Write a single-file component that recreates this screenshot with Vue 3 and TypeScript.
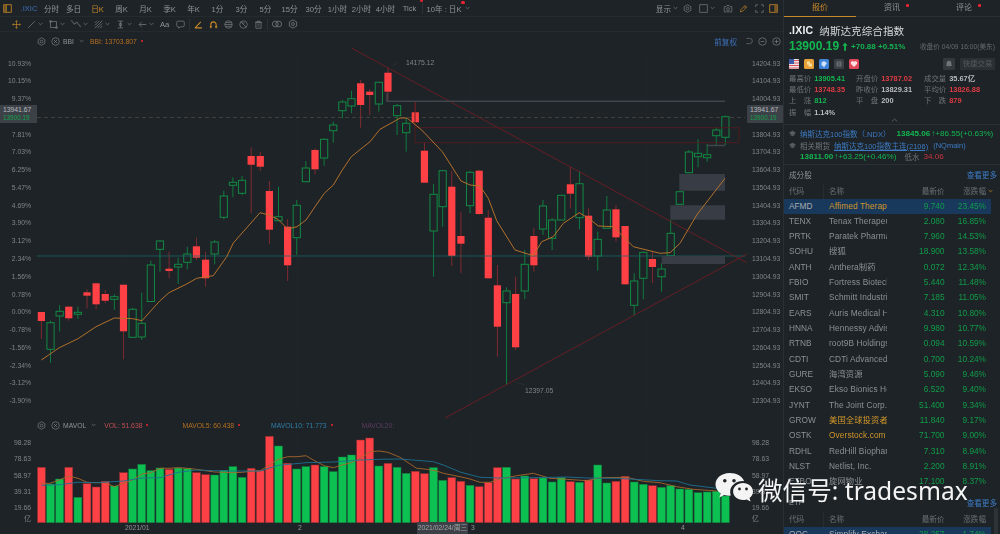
<template>
  <div class="app">
    <div class="ui">
      <div class="main">
        <!-- 周期栏 -->
        <div class="period-bar">
          <svg class="ic panel-ic" viewBox="0 0 12 12"><rect x="1" y="1" width="10" height="10" /><path d="M4.5 1v10" /><rect x="1.5" y="1.5" width="3" height="9" class="solid" /></svg>
          <span class="cell symbol">.IXIC</span>
          <span class="cell wide">分时</span>
          <span class="cell wide">多日</span>
          <span
            v-for="p in periods"
            :key="p"
            class="cell"
            :class="{ on: p === '日K', dotted: p === 'Tick' }"
          >{{ p }}</span>
          <i class="vsep"></i>
          <span class="range">10年 : 日K<i class="red-dot"></i><svg class="chev" viewBox="0 0 6 4"><path d="M.8.8 3 3l2.2-2.2" /></svg></span>
          <div class="bar-right">
            <span class="show">显示</span>
            <svg class="chev" viewBox="0 0 6 4"><path d="M.8.8 3 3l2.2-2.2" /></svg>
            <svg class="ic r1" viewBox="0 0 12 12"><path d="M6 1l4.4 2.5v5L6 11 1.6 8.5v-5z" /><circle cx="6" cy="6" r="1.8" /></svg>
            <svg class="ic r2" viewBox="0 0 12 12"><rect x="1" y="1" width="10" height="10" /></svg>
            <svg class="chev" viewBox="0 0 6 4"><path d="M.8.8 3 3l2.2-2.2" /></svg>
            <svg class="ic r3" viewBox="0 0 12 12"><path d="M1 3.5h2.5l1-1.5h3l1 1.5H11v7H1z" /><circle cx="6" cy="6.8" r="2" /></svg>
            <svg class="ic r4 orange" viewBox="0 0 12 12"><path d="M2 10.5l.6-3L8 2l2.2 2.2-5.4 5.5zM6.8 3.2 9 5.4" /></svg>
            <svg class="ic r5" viewBox="0 0 12 12"><path d="M1 4V1h3M8 1h3v3M11 8v3H8M4 11H1V8" /></svg>
            <svg class="ic r6 panel-ic" viewBox="0 0 12 12"><rect x="1" y="1" width="10" height="10" /><rect x="7" y="1.5" width="3.5" height="9" class="solid" /></svg>
          </div>
        </div>

        <!-- 画线工具 -->
        <div class="tool-bar">
          <template v-for="t in tools" :key="t.id">
            <i v-if="t.id.startsWith('sep')" class="tool-sep"></i>
            <span v-else-if="t.id === 'text'" class="aa">Aa</span>
            <template v-else>
              <svg class="ic tool" :class="[t.tone, { wider: t.wide }]" viewBox="0 0 12 12">
                <path :d="t.d" />
              </svg>
              <svg v-if="t.chev" class="chev tool-chev" viewBox="0 0 6 4"><path d="M.8.8 3 3l2.2-2.2" /></svg>
            </template>
          </template>
        </div>

        <!-- K线 -->
        <section class="pane price-pane">
          <div class="pane-head">
            <svg class="ic head-ic" viewBox="0 0 12 12"><path d="M6 1l4.4 2.5v5L6 11 1.6 8.5v-5z" /><circle cx="6" cy="6" r="1.8" /></svg>
            <svg class="ic head-ic" viewBox="0 0 12 12"><circle cx="6" cy="6" r="5" /><path d="M4 4l4 4M8 4l-4 4" /></svg>
            <span class="ind-name">BBI</span>
            <svg class="chev ind-chev" viewBox="0 0 6 4"><path d="M.8.8 3 3l2.2-2.2" /></svg>
            <span class="ind-val bbi">BBI: 13703.807</span>
            <i class="tiny-dot"></i>
            <div class="head-right">
              <span class="adjust">前复权</span>
              <svg class="ic hr1" viewBox="0 0 12 12"><path d="M2 2h5a3.8 3.8 0 0 1 0 8H2" /></svg>
              <svg class="ic hr2" viewBox="0 0 12 12"><circle cx="6" cy="6" r="5" /><path d="M3.5 6h5" /></svg>
              <svg class="ic hr2" viewBox="0 0 12 12"><circle cx="6" cy="6" r="5" /><path d="M3.5 6h5M6 3.5v5" /></svg>
            </div>
          </div>
          <div class="pane-body">
            <div class="axis axis-left">
              <span v-for="l in pctLabels" :key="l">{{ l }}</span>
            </div>
            <svg class="plot" viewBox="37 50 708 360">
              <path d="M123 50V410M297 50V410M471 50V410M646 50V410M37 114H745M37 203H745M37 347H745" class="grid" />
              <path d="M37 117.5H745" class="last-price" />
              <template v-for="(c, i) in candles" :key="i">
                <path :d="`M${cx(i)} ${c[2]}V${c[3]}`" :class="c[4] ? 'wick-up' : 'wick-down'" />
                <rect
                  :x="cx(i) - 3.6"
                  :y="c[0]"
                  width="7.2"
                  :height="c[1] - c[0]"
                  :class="c[4] ? 'body-up' : 'body-down'"
                />
              </template>
              <path d="M37 256H745" class="teal" />
              <path d="M352 48.300 746.7 262.7M445 418 747 254" class="trend" />
              <path d="M415 102V142.7H739V127.7H415" class="box-line" />
              <path d="M387 93V101.3H725" class="gray-line" />
              <rect x="679.3" y="174" width="45.7" height="16.7" class="zone" />
              <rect x="670.3" y="205.3" width="54.7" height="14.4" class="zone" />
              <rect x="661.7" y="256" width="63.3" height="8" class="zone" />
              <path d="M706.7 145.5H725" class="gray-line" />
              <polyline :points="bbiLine" class="bbi-line" />
              <path d="M392 66l6 -3M525 385l-10-3" class="note-line" />
              <text x="406" y="65" class="note">14175.12</text>
              <text x="525" y="393" class="note">12397.05</text>
            </svg>
            <div class="axis axis-right">
              <span v-for="l in priceLabels" :key="l">{{ l }}</span>
            </div>
          </div>
          <div class="price-tag tag-left"><span>13941.67</span><b>13900.19</b></div>
          <div class="price-tag tag-right"><span>13941.67</span><b>13900.19</b></div>
        </section>

        <!-- 成交量 -->
        <section class="pane vol-pane">
          <div class="pane-head vol-head">
            <svg class="ic head-ic" viewBox="0 0 12 12"><path d="M6 1l4.4 2.5v5L6 11 1.6 8.5v-5z" /><circle cx="6" cy="6" r="1.8" /></svg>
            <svg class="ic head-ic" viewBox="0 0 12 12"><circle cx="6" cy="6" r="5" /><path d="M4 4l4 4M8 4l-4 4" /></svg>
            <span class="ind-name">MAVOL</span>
            <svg class="chev ind-chev" viewBox="0 0 6 4"><path d="M.8.8 3 3l2.2-2.2" /></svg>
            <span class="ind-val v0">VOL: 51.638</span><i class="tiny-dot"></i>
            <span class="ind-val v5">MAVOL5: 60.438</span><i class="tiny-dot"></i>
            <span class="ind-val v10">MAVOL10: 71.773</span><i class="tiny-dot"></i>
            <span class="ind-val v20">MAVOL20:</span>
          </div>
          <div class="pane-body">
            <div class="axis axis-left vol-axis">
              <span v-for="l in volLabels" :key="l">{{ l }}</span>
              <span>亿</span>
            </div>
            <svg class="plot" viewBox="37 432 708 90">
              <path d="M123 432V523M297 432V523M471 432V523M646 432V523" class="grid" />
              <rect
                v-for="(b, i) in volumes"
                :key="i"
                :x="cx(i) - 3.9"
                :y="b[0]"
                width="7.8"
                :height="522.7 - b[0]"
                :class="b[1] ? 'vol-up' : 'vol-down'"
              />
              <polyline :points="ma5Line" class="ma5" />
              <polyline :points="ma10Line" class="ma10" />
            </svg>
            <div class="axis axis-right vol-axis">
              <span v-for="l in volLabels" :key="l">{{ l }}</span>
              <span>亿</span>
            </div>
          </div>
        </section>

        <div class="time-axis">
          <span v-for="t in timeTicks" :key="t.label" class="tick" :style="{ left: t.x + 'px' }">{{ t.label }}</span>
          <span class="tick cursor-time">2021/02/24/周三</span>
        </div>
      </div>

      <!-- 右侧面板 -->
      <aside class="side">
        <div class="side-tabs">
          <span class="side-tab active">报价</span>
          <span class="side-tab">资讯<i class="red-dot"></i></span>
          <span class="side-tab">评论<i class="red-dot"></i></span>
        </div>

        <div class="quote">
          <div class="title"><b>.IXIC</b><span>纳斯达克综合指数</span></div>
          <div class="price-line">
            <b class="last">13900.19</b>
            <svg class="up-arrow" viewBox="0 0 8 12"><path d="M4 .5 7.5 5H5.2v6.5H2.8V5H.5z" /></svg>
            <b class="chg">+70.88 +0.51%</b>
            <span class="close-time">收盘价 04/09 16:00(美东)</span>
          </div>
          <div class="badges">
            <svg class="badge" viewBox="0 0 10 10"><rect width="10" height="10" rx="1" fill="#e8e8ec" /><path d="M0 1.5h10M0 4h10M0 6.5h10M0 9h10" stroke="#e0525a" stroke-width="1.2" /><rect width="5" height="5" fill="#3c5aa8" /></svg>
            <svg class="badge" viewBox="0 0 10 10"><rect width="10" height="10" rx="1.5" fill="#e8a03a" /><path d="M3 2.5h3v2h2v3H4.500v-2H3z" fill="#f7dd9a" /></svg>
            <svg class="badge" viewBox="0 0 10 10"><rect width="10" height="10" rx="1.5" fill="#3f82d8" /><path d="M2.500 3.500 5 2l3 2-3 4.500-1.500-2H2.500z" fill="#cfe2f8" /></svg>
            <svg class="badge" viewBox="0 0 10 10"><rect width="10" height="10" rx="1.5" fill="#3b4046" /><path d="M3 3h4v4H3zM3 5h4" fill="none" stroke="#7d8288" stroke-width=".8" /></svg>
            <svg class="badge" viewBox="0 0 10 10"><rect width="10" height="10" rx="1.5" fill="#e0485a" /><path d="M5 8 2 5a1.700 1.700 0 0 1 3-2 1.700 1.700 0 0 1 3 2z" fill="#fbdde0" /></svg>
            <span class="bell-btn"><svg viewBox="0 0 10 10"><path d="M5 1a3 3 0 0 1 3 3v2l1 1.500H1L2 6V4a3 3 0 0 1 3-3zM4 8.500h2v.7H4z" /></svg></span>
            <span class="trade-btn">快捷交易</span>
          </div>

          <div class="stats">
            <div v-for="s in quoteStats" :key="s.label" class="stat">
              <span class="stat-label">{{ s.label }}</span>
              <b :class="s.tone">{{ s.value }}</b>
            </div>
          </div>
          <svg class="fold" viewBox="0 0 8 4"><path d="M1 3.500 4 1l3 2.500" /></svg>
        </div>

        <div class="related">
          <div class="rel-row">
            <svg class="layer" viewBox="0 0 8 8"><path d="M4 1l3.500 2.200L4 5.400.5 3.200zM1 5l3 1.800L7 5" /></svg>
            <span class="link">纳斯达克100指数（.NDX）</span>
            <span class="rel-num">13845.06</span>
            <span class="rel-chg">↑+86.55(+0.63%)</span>
          </div>
          <div class="rel-row">
            <svg class="layer" viewBox="0 0 8 8"><path d="M4 1l3.500 2.200L4 5.400.5 3.200zM1 5l3 1.800L7 5" /></svg>
            <span class="rel-lab">相关期货</span>
            <span class="link under">纳斯达克100指数主连(2106)</span>
            <span class="link nq">(NQmain)</span>
          </div>
          <div class="rel-row third">
            <span class="rel-num">13811.00</span>
            <span class="rel-chg">↑+63.25(+0.46%)</span>
            <span class="rel-lab basis">低水</span>
            <span class="basis-val">34.06</span>
          </div>
        </div>

        <div class="sec-head"><span>成分股</span><a>查看更多</a></div>
        <div class="thead">
          <span>代码</span><span>名称</span><span class="num">最新价</span>
          <span class="num">涨跌幅<svg class="sort" viewBox="0 0 6 4"><path d="M.8.8 3 3l2.200-2.200" /></svg></span>
        </div>
        <div class="tbody">
          <div
            v-for="(r, i) in holdings"
            :key="r.code"
            class="trow"
            :class="{ selected: i === 0 }"
          >
            <span>{{ r.code }}</span>
            <span class="name" :class="{ hot: r.hot }">{{ r.name }}</span>
            <span class="num up">{{ r.price }}</span>
            <span class="num up">{{ r.pct }}</span>
          </div>
        </div>

        <div class="sec-head etf-head"><span>ETF</span><a>查看更多</a></div>
        <div class="thead">
          <span>代码</span><span>名称</span><span class="num">最新价</span><span class="num">涨跌幅</span>
        </div>
        <div class="trow selected">
          <span>QQC</span><span class="name">Simplify Exchang</span><span class="num up">28.257</span><span class="num up">1.74%</span>
        </div>
        <i class="scroll-thumb"></i>
      </aside>
    </div>

    <!-- 公众号水印 -->
    <div class="watermark">
      <svg class="wx" viewBox="0 0 38 34">
        <path d="M14.500 1C6.700 1 .5 6.100.5 12.400c0 3.600 2 6.800 5.200 8.900L4.300 25.400l4.900-2.500c1.700.5 3.400.8 5.300.8l1.300-.1c-.4-1.200-.6-2.400-.6-3.700 0-6 5.700-10.800 12.700-10.800l1.200.1C27.700 4.400 21.600 1 14.500 1z" />
        <path d="M28 11c-5.500 0-9.900 3.800-9.900 8.500s4.400 8.500 9.900 8.500c1.300 0 2.500-.2 3.600-.6l4 2.100-1.100-3.400c2.100-1.600 3.500-4 3.500-6.600C38 14.800 33.500 11 28 11z" />
        <circle cx="9.800" cy="8.700" r="1.800" class="eye" />
        <circle cx="19" cy="8.700" r="1.800" class="eye" />
        <circle cx="24.500" cy="17" r="1.400" class="eye" />
        <circle cx="31.500" cy="17" r="1.400" class="eye" />
      </svg>
      <span>微信号: tradesmax</span>
    </div>
  </div>
</template>

<script setup lang="ts">
import { computed } from 'vue'

type Candle = [number, number, number, number, boolean]

const periods = ['日K', '周K', '月K', '季K', '年K', '1分', '3分', '5分', '15分', '30分', '1小时', '2小时', '4小时', 'Tick']

const tools = [
  { id: 'move', tone: 'orange', d: 'M6 .8v10.400M.8 6h10.400M4.500 2.300 6 .8l1.500 1.500M4.500 9.700 6 11.200l1.500-1.500M2.300 4.500.8 6l1.500 1.500M9.700 4.500 11.200 6 9.700 7.500' },
  { id: 'line', chev: true, d: 'M1.500 10.500 10.500 1.500' },
  { id: 'rect', chev: true, d: 'M2 2h8v8H2zM1 1h2v2H1zM9 9h2v2H9z' },
  { id: 'zig', chev: true, wide: true, d: 'M.5 2 4 6l3-2 4.500 5M.5 2h1M4 6h1M7 4h1M10.500 9h1' },
  { id: 'hatch', chev: true, d: 'M1 4 4 1M1 7.500 7.500 1M1 11 11 1M4.500 11 11 4.500M8 11l3-3' },
  { id: 'fib', chev: true, d: 'M2.500 1.500h7M2.500 10.500h7M6 1.500v9M4.500 4.500h3v3h-3z' },
  { id: 'arrow', chev: true, d: 'M11 6H1.500M5 2.500 1.500 6 5 9.500' },
  { id: 'text' },
  { id: 'note', d: 'M2.500 1.500h7a1.500 1.500 0 0 1 1.500 1.500v4.500A1.500 1.500 0 0 1 9.500 9H6l-2.500 2V9h-1A1.500 1.500 0 0 1 1 7.500V3a1.500 1.500 0 0 1 1.500-1.500z' },
  { id: 'sep1' },
  { id: 'angle', tone: 'orange bold', d: 'M1 10.500h9.500M1.500 10.500 9 2.500' },
  { id: 'magnet', tone: 'orange bold', d: 'M2.500 11V6a3.500 3.500 0 0 1 7 0v5M1 9h3M8 9h3' },
  { id: 'ruler', d: 'M6 1a5 5 0 1 0 0 10A5 5 0 0 0 6 1zM1 6h10M2.500 3.500h7M2.500 8.500h7' },
  { id: 'hide', d: 'M6 1a5 5 0 1 0 0 10A5 5 0 0 0 6 1zM2.500 2.500l7 7M4 4h3.500' },
  { id: 'trash', d: 'M2.500 3h7v8h-7zM1.500 3h9M4.500 3V1.500h3V3M4.500 5.500h3M4.500 8h3' },
  { id: 'sep2' },
  { id: 'rings', wide: true, d: 'M4 2.500a3.500 3.500 0 1 0 0 7 3.500 3.500 0 0 0 0-7zM8 2.500a3.500 3.500 0 1 0 0 7 3.500 3.500 0 0 0 0-7z' },
  { id: 'gear', wide: true, d: 'M6 1l4.400 2.500v5L6 11 1.600 8.500v-5zM6 4.200a1.800 1.800 0 1 0 0 3.600 1.800 1.800 0 0 0 0-3.600z' }
]

const pctLabels = ['10.93%', '10.15%', '9.37%', '8.59%', '7.81%', '7.03%', '6.25%', '5.47%', '4.69%', '3.90%', '3.12%', '2.34%', '1.56%', '0.78%', '0.00%', '-0.78%', '-1.56%', '-2.34%', '-3.12%', '-3.90%']
const priceLabels = Array.from({ length: 20 }, (_, i) => (14204.93 - i * 100).toFixed(2))
const volLabels = ['98.28', '78.63', '58.97', '39.31', '19.66']

const timeTicks = [
  { label: '2021/01', x: 125 },
  { label: '2', x: 298 },
  { label: '3', x: 471 },
  { label: '4', x: 681 }
]

// 上沿, 下沿, 上影, 下影, 是否阴线(红)
const candles: Candle[] = [
  [312, 321, 312, 339, true], [322.7, 349.3, 320.7, 362.7, false], [311.3, 316, 305, 331.7, false], [306.7, 318.3, 306, 320.7, true],
  [312.3, 314.3, 306.7, 319, false], [292.3, 295.7, 289.3, 308.3, true], [283.3, 304.3, 282.7, 309.3, true], [294, 300.7, 290, 303.3, true],
  [296.7, 299.3, 294.3, 310, false], [284.7, 331.3, 284.7, 359.3, true], [309.3, 337.3, 307.7, 337.3, false], [323.3, 337, 292.7, 340, false],
  [265, 301.5, 260.7, 301.5, false], [241, 249.3, 240, 271.7, false], [268.7, 271, 251.7, 278.3, true], [264.3, 267, 257.7, 284, false],
  [254, 262.3, 246.7, 269.3, false], [246.3, 257.7, 237.7, 260, true], [259.7, 278.3, 251.7, 286.7, true], [242, 254, 240, 264.3, false],
  [196, 217.3, 190.7, 219.3, false], [182.3, 185.3, 177.3, 197.3, false], [180.3, 193.3, 176, 195, false], [156, 164.7, 147.3, 213.3, true],
  [156, 166.7, 151.7, 171, true], [191, 229.7, 181, 244, true], [216.7, 220.7, 186.7, 220.7, false], [226.7, 265.3, 219.3, 281, true],
  [205.3, 237.7, 200, 255, false], [168, 181.7, 161, 182.3, false], [150, 169.3, 148.3, 174.3, true], [139.3, 158, 138.3, 165.7, false],
  [125, 130.7, 121.7, 142.7, false], [102, 110.7, 100, 118.3, false], [98.7, 106, 90.7, 113, false], [83.3, 105, 80, 127.7, true],
  [91.7, 95, 89.3, 115, true], [82.3, 104, 81.7, 111.7, false], [72.7, 91.7, 68.3, 101, true], [105.7, 115.7, 104, 135, false],
  [123.3, 132.7, 118, 151.7, false], [112.3, 122.3, 101.7, 122.3, true], [150.7, 182.7, 142.7, 182.7, true], [194.3, 231, 184, 276.7, false],
  [170.7, 206.7, 170, 226.7, false], [186.7, 256, 170.7, 266, true], [236, 243.7, 211.7, 273.3, true], [172.3, 205.7, 170.7, 213.3, false],
  [170.7, 214, 170, 215, true], [217.7, 278.3, 210, 278.3, true], [285.3, 326.7, 265, 356.7, true], [291, 302.7, 287.3, 385, false],
  [294, 347.3, 276.7, 350, true], [264.3, 291, 250, 299, false], [236, 265.3, 227.7, 271.7, true], [206, 229, 200, 235, false],
  [220, 238.3, 218.3, 250, false], [195.3, 220, 195, 220, false], [184.3, 193.7, 166.7, 208.3, true], [183.7, 217.7, 171, 229.3, false],
  [215.700, 256.7, 208.3, 260, true], [239.3, 256, 231.7, 270.7, false], [210, 228.3, 196, 228.3, false], [209.3, 237.3, 205, 241.7, true],
  [226, 284.3, 226, 284.3, true], [281, 305.3, 273.3, 315.7, false], [252.3, 278.3, 251.7, 299.3, false], [259, 267, 251.7, 283, true],
  [269, 276.7, 263.3, 291.7, false], [233.3, 255.7, 220, 256, false], [191.7, 204.3, 191, 205, false], [152, 172.7, 150, 173.3, false],
  [153.3, 156.7, 139.3, 167.3, false], [154.7, 157.7, 144, 161.7, false], [130, 135.7, 127, 145, false], [116.7, 137.3, 115.5, 145, false]
]

// 顶部y(原图放大坐标), 是否红柱
const volZoom: [number, boolean][] = [
  [172, true], [222, false], [207, false], [172, true], [262, false], [221, true], [231, true], [214, true], [228, false], [188, true],
  [177, false], [163, false], [182, false], [174, false], [178, true], [174, false], [176, false], [188, true], [194, true], [195, false],
  [181, false], [170, false], [202, false], [175, true], [181, true], [79, true], [108, false], [160, true], [177, false], [170, false],
  [165, true], [170, false], [185, false], [141, false], [135, false], [90, true], [84, true], [168, false], [160, true], [172, false],
  [190, false], [184, true], [191, true], [173, false], [211, false], [203, true], [214, true], [226, false], [230, true], [218, true],
  [173, true], [172, false], [207, true], [198, false], [206, true], [204, false], [216, false], [203, false], [215, true], [217, false],
  [210, true], [165, false], [219, false], [214, true], [199, true], [216, false], [223, false], [227, true], [232, false], [227, false],
  [237, false], [238, false], [248, false], [246, false], [244, false], [258, false]
]
const volumes = volZoom.map(([z, red]) => [410 + z / 3, red] as [number, boolean])

const bbi = [
  [41.3, 360], [59.3, 347.7], [78, 338.7], [96, 326.7], [114.3, 318], [132.7, 318.7], [142, 320.7], [160, 300.7], [169, 292.7], [186.7, 284],
  [196.7, 278.3], [213.3, 275.7], [226.7, 256.7], [233.3, 243], [260, 212.7], [269.3, 215], [278, 219.3], [287.7, 229], [297, 226.7], [306, 220],
  [315, 206.7], [324.3, 193.3], [333.3, 185], [342.3, 170], [351.3, 156.7], [370, 141.7], [380, 129.3], [396.7, 120], [400, 118], [407, 118],
  [421.7, 130], [442.3, 151.7], [461, 181], [470, 185], [480, 186], [488.3, 198.3], [496.7, 220.7], [515, 250], [533.3, 255.700], [541.7, 241.7],
  [553.3, 236.7], [563.3, 223.3], [579.3, 212.7], [590, 219.3], [598.3, 226], [613.3, 226.7], [633.3, 246.7], [660, 253.3], [670, 252.7], [680, 243.3],
  [696.7, 215], [725, 178.3]
]

const ma5 = [
  [124, 220], [150, 220], [178, 210], [206, 198], [234, 205], [261, 217], [288, 218], [316, 218], [343, 230], [371, 220], [398, 210], [426, 192],
  [453, 188], [480, 175], [507, 175], [535, 173], [562, 175], [589, 178], [616, 182], [644, 186], [671, 187], [699, 188], [726, 187], [753, 184],
  [781, 182], [808, 165], [835, 148], [863, 140], [891, 140], [918, 137], [945, 153], [973, 167], [1000, 173], [1027, 165], [1054, 158], [1082, 145],
  [1110, 125], [1137, 123], [1164, 127], [1200, 142], [1250, 175], [1280, 178], [1310, 183], [1330, 190], [1380, 200], [1410, 207], [1440, 217],
  [1470, 217], [1500, 207], [1550, 197], [1600, 190], [1650, 205], [1700, 208], [1760, 212], [1800, 203], [1880, 202], [1930, 214], [1980, 218],
  [2030, 230], [2080, 238], [2150, 243]
]
const ma10 = [
  [124, 226], [178, 224], [234, 217], [288, 218], [371, 213], [426, 204], [480, 203], [535, 187], [589, 180], [644, 182], [699, 183], [781, 183],
  [835, 166], [918, 158], [1000, 156], [1082, 150], [1137, 148], [1200, 147], [1250, 151], [1300, 155], [1330, 165], [1380, 186], [1440, 202],
  [1500, 204], [1600, 203], [1700, 201], [1760, 204], [1850, 205], [1980, 212], [2030, 213], [2070, 225], [2150, 235]
]

const toPoints = (pts: number[][]) => pts.map(([x, y]) => `${x},${y}`).join(' ')
const zoomed = (pts: number[][]) => pts.map(([x, y]) => [+(x / 3).toFixed(1), +(410 + y / 3).toFixed(1)])

const bbiLine = computed(() => toPoints(bbi))
const ma5Line = computed(() => toPoints(zoomed(ma5)))
const ma10Line = computed(() => toPoints(zoomed(ma10)))

function cx(i: number): number {
  return +(41.4 + 9.12 * i).toFixed(2)
}

const quoteStats = [
  { label: '最高价', value: '13905.41', tone: 'up' },
  { label: '开盘价', value: '13787.02', tone: 'down' },
  { label: '成交量', value: '35.67亿', tone: 'plain' },
  { label: '最低价', value: '13748.35', tone: 'down' },
  { label: '昨收价', value: '13829.31', tone: 'plain' },
  { label: '平均价', value: '13826.88', tone: 'down' },
  { label: '上　涨', value: '812', tone: 'up' },
  { label: '平　盘', value: '200', tone: 'plain' },
  { label: '下　跌', value: '879', tone: 'down' },
  { label: '振　幅', value: '1.14%', tone: 'plain' }
]

const holdings = [
  { code: 'AFMD', name: 'Affimed Therapeutics', price: '9.740', pct: '23.45%', hot: true },
  { code: 'TENX', name: 'Tenax Therapeutics', price: '2.080', pct: '16.85%' },
  { code: 'PRTK', name: 'Paratek Pharmaceuticals', price: '7.960', pct: '14.53%' },
  { code: 'SOHU', name: '搜狐', price: '18.900', pct: '13.58%' },
  { code: 'ANTH', name: 'Anthera制药', price: '0.072', pct: '12.34%' },
  { code: 'FBIO', name: 'Fortress Biotech', price: '5.440', pct: '11.48%' },
  { code: 'SMIT', name: 'Schmitt Industries', price: '7.185', pct: '11.05%' },
  { code: 'EARS', name: 'Auris Medical Holding', price: '4.310', pct: '10.80%' },
  { code: 'HNNA', name: 'Hennessy Advisors', price: '9.980', pct: '10.77%' },
  { code: 'RTNB', name: 'root9B Holdings', price: '0.094', pct: '10.59%' },
  { code: 'CDTI', name: 'CDTi Advanced', price: '0.700', pct: '10.24%' },
  { code: 'GURE', name: '海湾资源', price: '5.090', pct: '9.46%' },
  { code: 'EKSO', name: 'Ekso Bionics Holdings', price: '6.520', pct: '9.40%' },
  { code: 'JYNT', name: 'The Joint Corp.', price: '51.400', pct: '9.34%' },
  { code: 'GROW', name: '美国全球投资者', price: '11.840', pct: '9.17%', hot: true },
  { code: 'OSTK', name: 'Overstock.com', price: '71.700', pct: '9.00%', hot: true },
  { code: 'RDHL', name: 'RedHill Biopharma', price: '7.310', pct: '8.94%' },
  { code: 'NLST', name: 'Netlist, Inc.', price: '2.200', pct: '8.91%' },
  { code: 'ETBO', name: '旋网物业', price: '17.100', pct: '8.37%' }
]
</script>

<style>
html,
body {
  margin: 0;
  background: #1e2327;
}
</style>

<style scoped>
.app {
  position: relative;
  width: 1000px;
  height: 534px;
  overflow: hidden;
  background: #1e2327;
  color: #8f9499;
  font-family: "Liberation Sans", "Noto Sans CJK SC", sans-serif;
}

.ui {
  display: flex;
  width: 100%;
  height: 100%;
  filter: blur(0.35px);
}

.main {
  display: flex;
  flex-direction: column;
  width: 783px;
  flex: none;
}

i {
  font-style: normal;
}

svg {
  display: block;
  flex: none;
}

.ic {
  width: 9px;
  height: 9px;
  fill: none;
  stroke: #7c8186;
  stroke-width: 0.9;
}

.ic.orange {
  stroke: #c98a2a;
}

.ic.bold {
  stroke-width: 1.4;
}

.panel-ic {
  stroke: #c98a2a;
  stroke-width: 1.1;
}

.panel-ic .solid {
  fill: #7a5a26;
  stroke: none;
}

.chev {
  width: 5px;
  height: 4px;
  fill: none;
  stroke: #7c8186;
  stroke-width: 0.8;
}

/* 周期栏 */
.period-bar {
  display: flex;
  align-items: center;
  height: 17px;
  padding-left: 3px;
  font-size: 7.6px;
  border-bottom: 1px solid #252a2f;
  box-sizing: border-box;
}

.cell {
  position: relative;
  width: 24px;
  text-align: center;
  flex: none;
}

.cell.symbol {
  width: 23px;
  margin-left: 5.5px;
  color: #3c6fb8;
}

.cell.wide {
  width: 22px;
}

.cell.wide + .cell:not(.wide) {
  margin-left: 1px;
}

.cell.on {
  color: #c98a2a;
}

.cell.dotted::after {
  content: "";
  position: absolute;
  top: -5px;
  right: -1px;
  width: 3px;
  height: 3px;
  border-radius: 50%;
  background: #f02430;
}

.vsep {
  width: 1px;
  height: 11px;
  background: #2c3136;
}

.range {
  position: relative;
  display: flex;
  align-items: center;
  gap: 3px;
  margin-left: 4px;
}

.range .red-dot {
  position: absolute;
  top: -2px;
  right: 5px;
}

.red-dot {
  display: inline-block;
  width: 3.500px;
  height: 3.500px;
  border-radius: 50%;
  background: #f02430;
}

.bar-right {
  display: flex;
  align-items: center;
  margin-left: auto;
  padding-right: 5px;
}

.show {
  margin-right: 2px;
}

.r1 {
  margin-left: 5px;
}

.r2 {
  margin-left: 7px;
  margin-right: 2px;
}

.r3 {
  width: 10px;
  margin-left: 8px;
}

.r4 {
  margin-left: 6px;
}

.r5 {
  margin-left: 7px;
}

.r6 {
  margin-left: 5px;
}

/* 工具栏 */
.tool-bar {
  display: flex;
  align-items: center;
  gap: 6px;
  height: 15px;
  padding-left: 12px;
  border-bottom: 1px solid #252a2f;
  box-sizing: border-box;
}

.tool.wider {
  width: 10px;
  height: 10px;
}

.tool-chev {
  margin-left: -4px;
}

.tool-sep {
  width: 1px;
  height: 11px;
  background: #2c3136;
  margin: 0 -2px;
}

.aa {
  width: 10px;
  font-size: 7.6px;
}

/* 图表区 */
.pane {
  position: relative;
  display: flex;
  flex-direction: column;
}

.price-pane {
  height: 378px;
}

.vol-pane {
  height: 112px;
}

.pane-head {
  display: flex;
  align-items: center;
  height: 18px;
  box-sizing: border-box;
  padding-left: 37px;
  font-size: 6.8px;
  flex: none;
}

.head-ic {
  margin-right: 5px;
}

.ind-name {
  margin-left: -2px;
}

.ind-chev {
  margin-left: 5px;
}

.ind-val {
  margin-left: 6px;
  white-space: nowrap;
}

.bbi {
  color: #b56f20;
}

.tiny-dot {
  width: 2px;
  height: 2px;
  margin-left: 4px;
  background: #f02430;
  border-radius: 50%;
}

.head-right {
  display: flex;
  align-items: center;
  margin-left: auto;
  padding-right: 2px;
  gap: 5px;
}

.adjust {
  font-size: 7.6px;
  color: #3c6fb8;
  margin-right: 3px;
}

.hr1 {
  width: 8px;
  height: 8px;
}

.pane-body {
  display: flex;
  flex: 1;
  min-height: 0;
}

.axis {
  display: flex;
  flex-direction: column;
  flex: none;
  width: 38px;
  box-sizing: border-box;
  font-size: 6.8px;
  color: #7f8489;
}

.axis span {
  flex: none;
  height: 17.77px;
  line-height: 17.77px;
  white-space: nowrap;
}

.axis-left {
  width: 37px;
  padding-top: 4.600px;
  padding-right: 6px;
  text-align: right;
}

.axis-right {
  padding-top: 4.600px;
  padding-left: 7px;
}

.plot {
  width: 708px;
  height: 100%;
  overflow: visible;
}

.grid {
  stroke: #24292d;
  stroke-width: 0.6;
  fill: none;
}

.last-price {
  stroke: #4b4640;
  stroke-width: 0.8;
  stroke-dasharray: 4 3;
}

.wick-up {
  stroke: #7e2a30;
  stroke-width: 1;
}

.wick-down {
  stroke: #0f7a3e;
  stroke-width: 1;
}

.body-up {
  fill: #ff4044;
}

.body-down {
  fill: #1e2327;
  stroke: #128a44;
  stroke-width: 1;
}

.teal {
  stroke: #17696a;
  stroke-width: 1;
  opacity: 0.75;
}

.trend {
  stroke: #6e1e24;
  stroke-width: 0.9;
  fill: none;
}

.box-line {
  stroke: #521b20;
  stroke-width: 0.9;
  fill: none;
}

.gray-line {
  stroke: #41454e;
  stroke-width: 1.500;
  fill: none;
}

.zone {
  fill: #3b3f48;
  fill-opacity: 0.9;
}

.bbi-line {
  fill: none;
  stroke: #b3712c;
  stroke-width: 1;
}

.note-line {
  stroke: #33383d;
  stroke-width: 0.5;
  fill: none;
}

.note {
  font-size: 6.8px;
  fill: #7f8489;
}

.price-tag {
  position: absolute;
  top: 73px;
  display: flex;
  flex-direction: column;
  justify-content: center;
  height: 18px;
  padding: 0 0 0 3px;
  box-sizing: border-box;
  background: #3c4147;
  font-size: 6.8px;
  line-height: 8px;
  color: #b9bcc0;
}

.price-tag b {
  font-weight: 400;
  color: #12a04c;
  font-size: 6.4px;
}

.tag-left {
  left: 0;
  width: 37px;
}

.tag-right {
  left: 747px;
  width: 36px;
  border-radius: 1px;
}

/* 成交量 */
.vol-head {
  height: 22px;
  padding-top: 8px;
}

.v0 {
  margin-left: 8px;
  color: #c24e52;
}

.v5 {
  margin-left: 34px;
  color: #b56f20;
}

.v10 {
  margin-left: 31px;
  color: #2f7fa8;
}

.v20 {
  margin-left: 29px;
  color: #5c3a60;
}

.vol-axis {
  padding-top: 2.800px;
}

.vol-axis span {
  height: 16.4px;
  line-height: 16.4px;
}

.vol-axis span:last-child {
  height: 4px;
  line-height: 4px;
}

.vol-up {
  fill: #fb4145;
  stroke: #8d2f30;
  stroke-width: 0.5;
}

.vol-down {
  fill: #0dc052;
  stroke: #107c3d;
  stroke-width: 0.5;
}

.ma5 {
  fill: none;
  stroke: #a8662a;
  stroke-width: 0.9;
}

.ma10 {
  fill: none;
  stroke: #1d7192;
  stroke-width: 0.9;
}

.time-axis {
  position: relative;
  height: 12px;
  flex: none;
  font-size: 6.8px;
}

.tick {
  position: absolute;
  top: 2px;
  white-space: nowrap;
}

.cursor-time {
  left: 417px;
  top: 0;
  width: 51px;
  height: 12px;
  line-height: 12px;
  text-align: center;
  background: #3c4147;
  color: #a6a9ad;
}

/* 右侧面板 */
.side {
  position: relative;
  display: flex;
  flex-direction: column;
  width: 217px;
  flex: none;
  border-left: 1px solid #2a2f34;
  box-sizing: border-box;
}

.side-tabs {
  display: flex;
  height: 17px;
  flex: none;
  border-bottom: 1px solid #2a2f34;
  box-sizing: border-box;
  font-size: 8px;
}

.side-tab {
  position: relative;
  flex: 1;
  text-align: center;
  line-height: 16px;
}

.side-tab.active {
  color: #c98a2a;
  border-bottom: 1px solid #c98a2a;
  height: 16px;
}

.side-tab .red-dot {
  position: absolute;
  top: 4px;
  left: 50%;
  margin-left: 14px;
  width: 2.500px;
  height: 2.500px;
}

.quote {
  position: relative;
  padding: 7px 5px 0;
  height: 108px;
  flex: none;
  box-sizing: border-box;
  border-bottom: 1px solid #2a2f34;
}

.title {
  display: flex;
  align-items: center;
  gap: 6px;
  height: 12px;
  color: #d6d8da;
  font-size: 10.600px;
}

.title b {
  font-size: 10.500px;
  color: #eef0f1;
  letter-spacing: 0.2px;
}

.price-line {
  display: flex;
  align-items: center;
  height: 14px;
  margin-top: 3px;
  color: #13b651;
}

.last {
  font-size: 12px;
}

.up-arrow {
  width: 6px;
  height: 9px;
  margin-left: 3px;
  fill: #13b651;
}

.chg {
  margin-left: 3px;
  font-size: 8px;
  white-space: nowrap;
}

.close-time {
  margin-left: auto;
  font-size: 6.700px;
  color: #666b70;
  white-space: nowrap;
}

.badges {
  display: flex;
  align-items: center;
  gap: 5px;
  height: 12px;
  margin-top: 5px;
}

.badge {
  width: 10px;
  height: 10px;
}

.bell-btn {
  display: flex;
  align-items: center;
  justify-content: center;
  width: 12px;
  height: 12px;
  margin-left: auto;
  background: #33383d;
  border-radius: 1px;
}

.bell-btn svg {
  width: 8px;
  height: 8px;
  fill: #6f7479;
}

.trade-btn {
  width: 35px;
  height: 12px;
  line-height: 12px;
  text-align: center;
  font-size: 7.400px;
  color: #55595e;
  background: #2b3035;
  border-radius: 1px;
}

.stats {
  display: grid;
  grid-template-columns: 67px 68px auto;
  grid-auto-rows: 11.200px;
  margin-top: 3px;
  font-size: 7.400px;
  line-height: 11.200px;
}

.stat {
  display: flex;
  gap: 3px;
  white-space: nowrap;
}

.stat-label {
  color: #6f7479;
}

.stat b.up {
  color: #13b651;
}

.stat b.down {
  color: #df3b42;
}

.stat b.plain {
  color: #b9bcc0;
}

.fold {
  position: absolute;
  left: 107px;
  bottom: 2px;
  width: 7px;
  height: 4px;
  fill: none;
  stroke: #6f7479;
  stroke-width: 0.8;
}

.related {
  padding: 2px 5px 0;
  height: 40px;
  flex: none;
  box-sizing: border-box;
  border-bottom: 1px solid #2a2f34;
  font-size: 7.500px;
}

.rel-row {
  display: flex;
  align-items: center;
  height: 12px;
  white-space: nowrap;
}

.rel-row.third {
  padding-left: 11px;
  height: 11.500px;
}

.layer {
  width: 7px;
  height: 7px;
  margin-right: 4px;
  fill: #5a5f64;
  stroke: #5a5f64;
  stroke-width: 0.6;
}

.link {
  color: #3c7cc4;
}

.link.under {
  margin-left: 4px;
  text-decoration: underline;
}

.link.nq {
  margin-left: 5px;
}

.rel-num {
  margin-left: 6px;
  color: #13b651;
  font-size: 8.100px;
  font-weight: 700;
}

.third .rel-num {
  margin-left: 0;
}

.rel-chg {
  margin-left: 1px;
  color: #13b651;
  font-size: 8.100px;
}

.rel-lab {
  color: #6f7479;
}

.basis {
  margin-left: 8px;
}

.basis-val {
  margin-left: 4px;
  color: #c9363d;
  font-size: 8.100px;
}

.sec-head {
  display: flex;
  align-items: center;
  justify-content: space-between;
  height: 18.500px;
  padding: 0 3px 0 5px;
  flex: none;
  font-size: 7.600px;
  box-sizing: border-box;
}

.sec-head a {
  color: #3c7cc4;
}

.thead,
.trow {
  display: grid;
  grid-template-columns: 34px 64px 57.500px 41.500px;
  width: 207px;
  padding-left: 5px;
  box-sizing: border-box;
  flex: none;
  white-space: nowrap;
}

.thead {
  height: 15px;
  line-height: 15px;
  font-size: 7.600px;
  color: #6a6f74;
}

.thead span + span {
  padding-left: 6px;
  box-shadow: inset 1px 0 0 #272c30;
}

.thead .num {
  display: flex;
  align-items: center;
  justify-content: flex-end;
  box-shadow: none;
}

.sort {
  width: 5px;
  height: 4px;
  margin-left: 2px;
  margin-right: -7px;
  fill: none;
  stroke: #c98a2a;
  stroke-width: 0.9;
}

.tbody {
  flex: none;
}

.trow {
  height: 15.330px;
  line-height: 15.330px;
  font-size: 8.300px;
  color: #8b9095;
}

.trow.selected {
  background: #18385c;
  color: #a8acb0;
}

.name {
  padding-left: 6px;
  overflow: hidden;
  letter-spacing: 0.1px;
}

.name.hot {
  color: #cf962a;
}

.num {
  text-align: right;
}

.up {
  color: #109c48;
}

.etf-head {
  height: 22px;
  padding-top: 3px;
}

.scroll-thumb {
  position: absolute;
  right: 2px;
  top: 508px;
  width: 4px;
  height: 26px;
  background: #2d3237;
}

/* 水印 */
.watermark {
  position: absolute;
  left: 715px;
  top: 471px;
  display: flex;
  align-items: center;
  gap: 5px;
  color: #f4f4f4;
  font-family: "Noto Sans", "Noto Sans CJK SC", sans-serif;
  font-size: 24.600px;
  white-space: nowrap;
}

.wx {
  width: 38px;
  height: 34px;
  fill: #f4f4f4;
}

.wx .eye {
  fill: #1e2327;
}
</style>
